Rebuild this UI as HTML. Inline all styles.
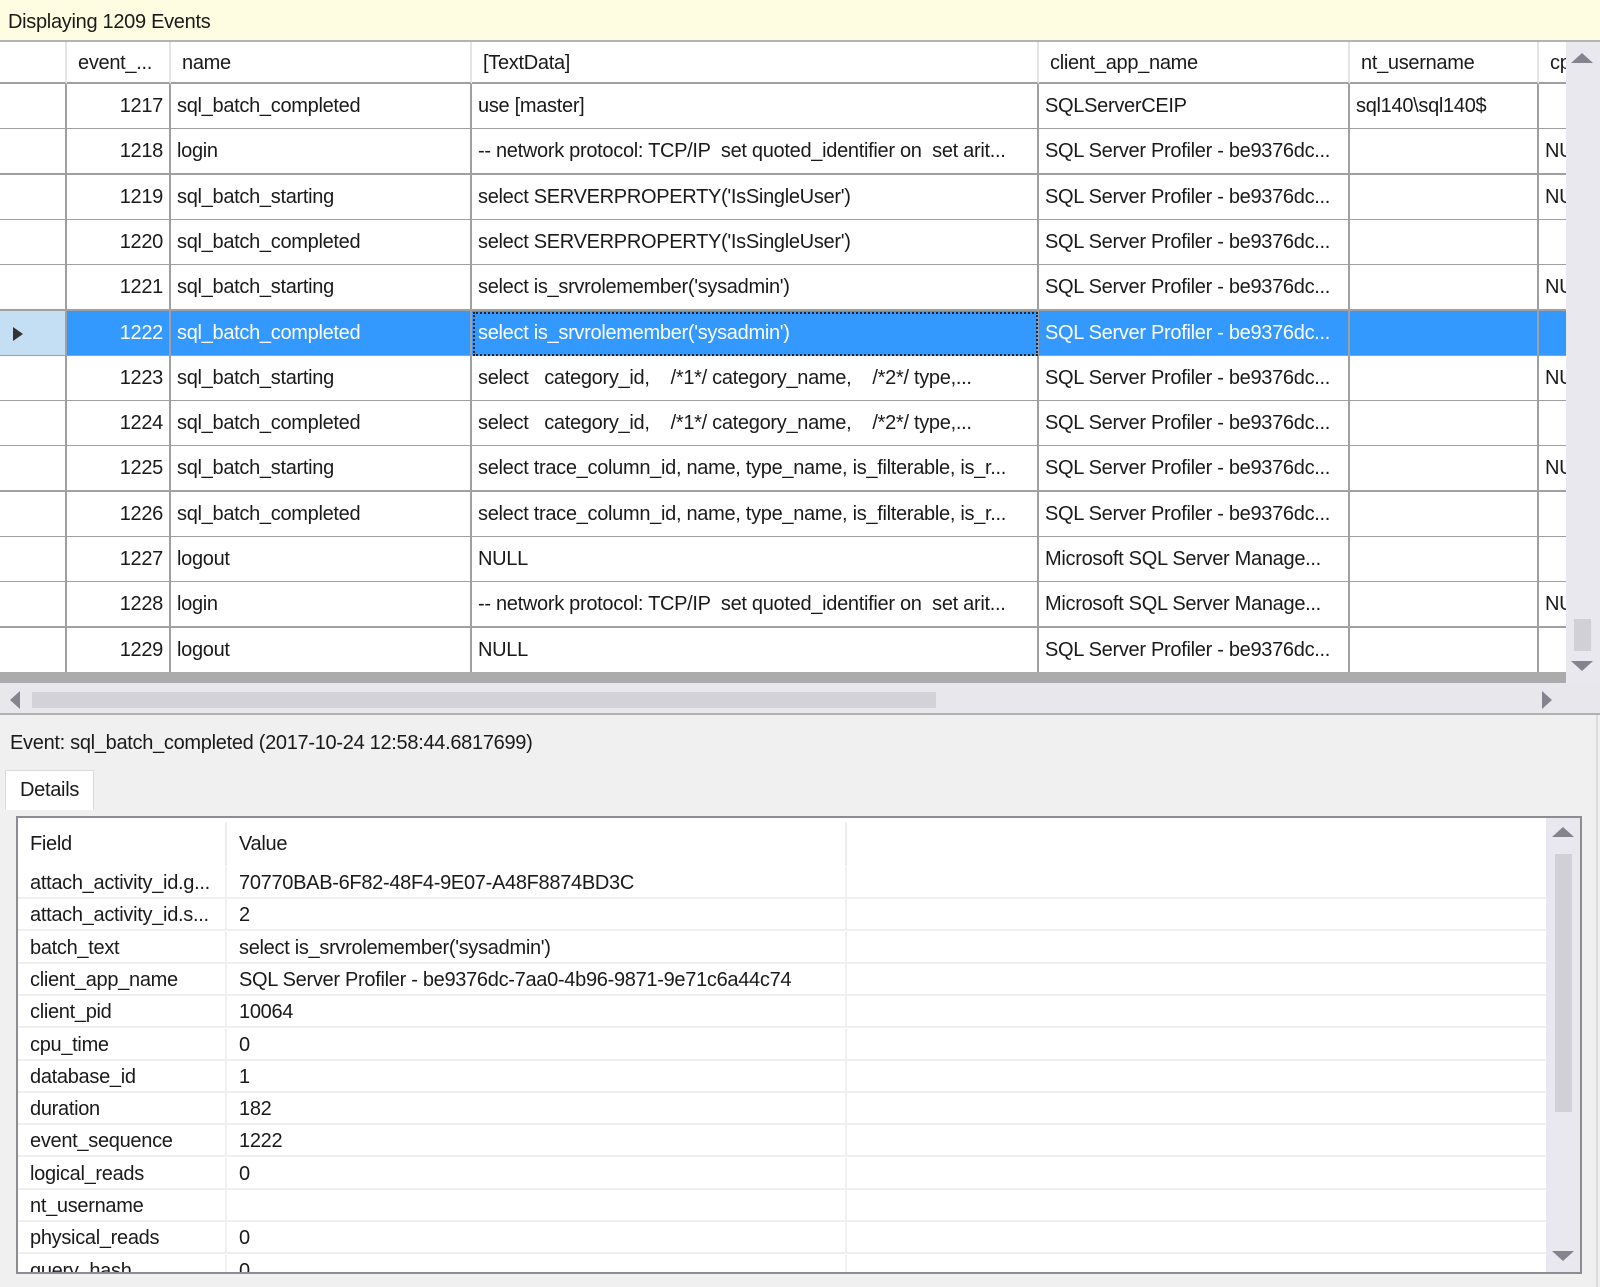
<!DOCTYPE html>
<html><head><meta charset="utf-8"><style>
*{margin:0;padding:0;box-sizing:border-box}
body{width:1600px;height:1287px;background:#f0f0f0;font-family:"Liberation Sans",sans-serif;font-size:20px;color:#1a1a1a;position:relative;overflow:hidden;letter-spacing:-0.3px}
.a{position:absolute;white-space:nowrap;overflow:hidden}
.c{position:absolute;height:45px;line-height:45px;padding:0 6px;white-space:nowrap;overflow:hidden;border-right:2px solid #a0a0a0;border-bottom:2px solid #a0a0a0;background:#fff}
.r{text-align:right}
.d{position:absolute;height:32px;line-height:32px;padding:0 12px;white-space:nowrap;overflow:hidden;border-bottom:2px solid #f0f0f0}
</style></head><body>
<div class="a" style="left:0;top:0;width:1600px;height:42px;background:#fffde1;line-height:44px;padding-left:8px;border-bottom:2px solid #b4b4b4">Displaying 1209 Events</div>
<div class="a" style="left:0;top:42px;width:1567px;height:631px;background:#fff">
<div id="g"></div>
</div>
<div class="a" style="left:0;top:672px;width:1567px;height:11px;background:#ababab"></div>
<div class="a" style="left:1566px;top:42px;width:34px;height:641px;background:#e8e8ee"></div>
<div class="a" style="left:1574px;top:619px;width:17px;height:32px;background:#d0d0d6"></div>
<svg class="a" style="left:1568px;top:52px" width="28" height="12"><polygon points="14,1 25,11 3,11" fill="#84848e"/></svg>
<svg class="a" style="left:1568px;top:660px" width="28" height="12"><polygon points="14,11 25,1 3,1" fill="#84848e"/></svg>
<div class="a" style="left:0;top:683px;width:1600px;height:32px;background:#e8e8ec;border-bottom:2px solid #b0b0b0"></div>
<div class="a" style="left:32px;top:692px;width:904px;height:16px;background:#d2d2d8"></div>
<svg class="a" style="left:8px;top:690px" width="14" height="20"><polygon points="2,10 12,1 12,19" fill="#84848e"/></svg>
<svg class="a" style="left:1540px;top:690px" width="14" height="20"><polygon points="12,10 2,1 2,19" fill="#84848e"/></svg>
<div class="a" style="left:10px;top:728px;line-height:30px">Event: sql_batch_completed (2017-10-24 12:58:44.6817699)</div>
<div class="a" style="left:5px;top:770px;width:89px;height:40px;background:#fff;border:1px solid #dadada;border-bottom:none;line-height:38px;padding-left:14px">Details</div>
<div class="a" style="left:16px;top:816px;width:1566px;height:458px;background:#fff;border:2px solid #8c8c94">
<div id="dt"></div>
<div class="a" style="right:0;top:0;width:34px;height:454px;background:#e8e8ee"></div>
<div class="a" style="right:8px;top:36px;width:17px;height:258px;background:#d0d0d6"></div>
<svg class="a" style="right:3px;top:8px" width="28" height="12"><polygon points="14,1 25,11 3,11" fill="#84848e"/></svg>
<svg class="a" style="right:3px;top:432px" width="28" height="12"><polygon points="14,11 25,1 3,1" fill="#84848e"/></svg>
</div>
<div class="a" style="left:1596px;top:715px;width:2px;height:572px;background:#dcdcdc"></div>
<script>
var cols=[0,67,171,472,1039,1350,1539,1600];
var hdr=["","event_...","name","[TextData]","client_app_name","nt_username","cpu"];
var P="SQL Server Profiler - be9376dc...",C="select &nbsp;&nbsp;category_id, &nbsp;&nbsp;&nbsp;/*1*/ category_name, &nbsp;&nbsp;&nbsp;/*2*/ type,...",T="select trace_column_id, name, type_name, is_filterable, is_r...",N="-- network protocol: TCP/IP &nbsp;set quoted_identifier on &nbsp;set arit...",M="Microsoft SQL Server Manage...";
var rows=[[1217,"sql_batch_completed","use [master]","SQLServerCEIP","sql140\\sql140$",""],
[1218,"login",N,P,"","NU"],[1219,"sql_batch_starting","select SERVERPROPERTY('IsSingleUser')",P,"","NU"],
[1220,"sql_batch_completed","select SERVERPROPERTY('IsSingleUser')",P,"",""],
[1221,"sql_batch_starting","select is_srvrolemember('sysadmin')",P,"","NU"],
[1222,"sql_batch_completed","select is_srvrolemember('sysadmin')",P,"",""],
[1223,"sql_batch_starting",C,P,"","NU"],[1224,"sql_batch_completed",C,P,"",""],
[1225,"sql_batch_starting",T,P,"","NU"],[1226,"sql_batch_completed",T,P,"",""],
[1227,"logout","NULL",M,"",""],[1228,"login",N,M,"","NU"],[1229,"logout","NULL",P,"",""]];
var h="";
for(var i=0;i<7;i++){h+='<div class="c" style="left:'+cols[i]+'px;top:0;width:'+(cols[i+1]-cols[i])+'px;height:42px;line-height:42px;padding-left:'+(i?11:0)+'px;border-right-color:#e4e4e4">'+hdr[i]+'</div>';}
rows.forEach(function(r,k){var t=42+k*45.3,sel=k==5;
h+='<div class="c" style="left:0;top:'+t+'px;width:67px;height:46px;'+(sel?'background:#c4def4':'')+'">'+(sel?'<svg style="position:absolute;left:12px;top:15px" width="12" height="16"><polygon points="1,1 11,8 1,15" fill="#333"/></svg>':'')+'</div>';
for(var j=0;j<6;j++){var st='left:'+cols[j+1]+'px;top:'+t+'px;width:'+(cols[j+2]-cols[j+1])+'px;height:46px;';
if(sel)st+='background:#3399ff;color:#fff;';
if(sel&&j==2)st+='outline:2px dotted #222;outline-offset:-3px;';
h+='<div class="c'+(j==0?' r':'')+'" style="'+st+'">'+r[j]+'</div>';}});
document.getElementById('g').innerHTML=h;
var dr=[["attach_activity_id.g...","70770BAB-6F82-48F4-9E07-A48F8874BD3C"],["attach_activity_id.s...","2"],["batch_text","select is_srvrolemember('sysadmin')"],["client_app_name","SQL Server Profiler - be9376dc-7aa0-4b96-9871-9e71c6a44c74"],["client_pid","10064"],["cpu_time","0"],["database_id","1"],["duration","182"],["event_sequence","1222"],["logical_reads","0"],["nt_username",""],["physical_reads","0"],["query_hash","0"]];
var d='<div class="d" style="left:0;top:4px;width:209px;height:44px;line-height:44px;border:none;border-right:2px solid #ececec">Field</div><div class="d" style="left:209px;top:4px;width:620px;height:44px;line-height:44px;border:none;border-right:2px solid #ececec">Value</div>';
dr.forEach(function(r,k){var t=49+k*32.3;
d+='<div class="d" style="left:0;top:'+t+'px;width:209px;border-right:2px solid #f0f0f0">'+r[0]+'</div><div class="d" style="left:209px;top:'+t+'px;width:620px;border-right:2px solid #f0f0f0">'+r[1]+'</div><div class="d" style="left:829px;top:'+t+'px;width:700px"></div>';});
document.getElementById('dt').innerHTML=d;
</script>
</body></html>
